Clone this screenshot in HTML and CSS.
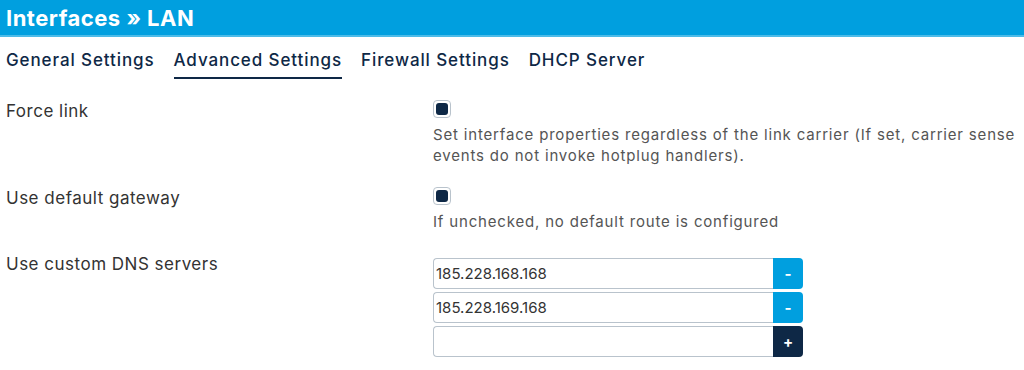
FILE: index.html
```html
<!DOCTYPE html>
<html>
<head>
<meta charset="utf-8">
<link rel="stylesheet" href="styles.css">
</head>
<body>
<header class="topbar"><h1 class="title">Interfaces » LAN</h1></header>
<nav class="tabs">
  <span class="tab">General Settings</span>
  <span class="tab active">Advanced Settings</span>
  <span class="tab">Firewall Settings</span>
  <span class="tab">DHCP Server</span>
</nav>
<div class="form">
  <div class="row">
    <div class="label">Force link</div>
    <div class="field">
      <span class="check"><span class="mark"></span></span>
      <div class="desc">Set interface properties regardless of the link carrier (If set, carrier sense events do not invoke hotplug handlers).</div>
    </div>
  </div>
  <div class="row">
    <div class="label">Use default gateway</div>
    <div class="field">
      <span class="check"><span class="mark"></span></span>
      <div class="desc">If unchecked, no default route is configured</div>
    </div>
  </div>
  <div class="row">
    <div class="label">Use custom DNS servers</div>
    <div class="field dns">
      <div class="dyn"><input class="txt" type="text" value="185.228.168.168"><span class="btn rm">-</span></div>
      <div class="dyn"><input class="txt" type="text" value="185.228.169.168"><span class="btn rm">-</span></div>
      <div class="dyn"><input class="txt" type="text" value=""><span class="btn add">+</span></div>
    </div>
  </div>
</div>
</body>
</html>
```
FILE: styles.css
```css
html, body { margin: 0; padding: 0; background: #fff; }
body { font-family: Inter, "Open Sans", sans-serif; color: #333; width: 1024px; overflow: hidden; }
.topbar { background: #009fdf; height: 35px; border-bottom: 2px solid #4cbbe8; display: flex; align-items: center; padding: 0 6px; }
.title { margin: 0; font-size: 22px; font-weight: 700; color: #fff; letter-spacing: 0.5px; }
.tabs { display: flex; gap: 19px; padding: 12px 6px 0; height: 30px; }
.tab { font-size: 17px; color: #0e2846; font-weight: 500; line-height: 22px; padding-bottom: 6px; height: 22px; letter-spacing: 0.9px; }
.tab.active { border-bottom: 2px solid #0e2846; }
.form { padding: 20px 0 0 6px; }
.row { display: flex; margin-bottom: 20px; }
.label { width: 427px; font-size: 17px; color: #333; line-height: 22px; padding-top: 1px; letter-spacing: 0.5px; }
.field { flex: 1; display: flex; flex-direction: column; align-items: flex-start; }
.check { width: 16px; height: 16px; border: 1px solid #b9c3cc; border-radius: 4px; display: flex; align-items: center; justify-content: center; box-sizing: content-box; margin-top: 1px; }
.mark { width: 12px; height: 12px; background: #0e2846; border-radius: 3px; }
.desc { font-size: 15px; color: #555; line-height: 21px; margin-top: 6px; letter-spacing: 0.82px; }
.dns { gap: 3px; margin-top: 6px; }
.dyn { display: flex; width: 370px; height: 31px; }
.txt { flex: 1; margin: 0; border: 1px solid #b9c3cc; border-right: 0; border-radius: 4px 0 0 4px; font-family: Inter, sans-serif; font-size: 15px; color: #333; padding: 0 2px; outline: none; }
.btn { width: 30px; display: flex; align-items: center; justify-content: center; color: #fff; font-size: 15px; font-weight: 700; border-radius: 0 4px 4px 0; font-family: Inter, sans-serif; }
.rm { background: #009fdf; }
.add { background: #0e2846; }
```
